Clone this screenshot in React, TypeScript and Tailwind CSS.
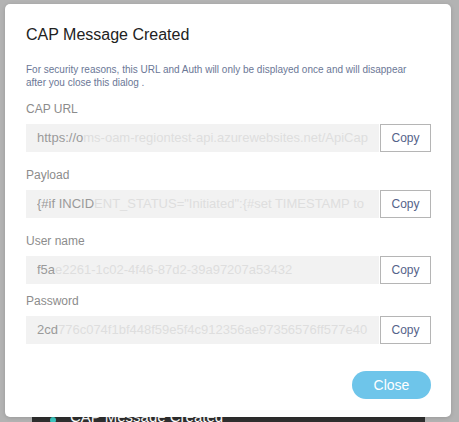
const fields = [
  {
    label: "CAP URL",
    shown: "https://o",
    hidden: "ms-oam-regiontest-api.azurewebsites.net/ApiCap",
    space: "",
  },
  {
    label: "Payload",
    shown: "{#if INCID",
    hidden: 'ENT_STATUS="Initiated":{#set TIMESTAMP to',
    space: "mt-[15px]",
  },
  {
    label: "User name",
    shown: "f5a",
    hidden: "e2261-1c02-4f46-87d2-39a97207a53432",
    space: "mt-[15px]",
  },
  {
    label: "Password",
    shown: "2cd",
    hidden: "776c074f1bf448f59e5f4c912356ae97356576ff577e40",
    space: "mt-[9px]",
  },
];

export default function App() {
  return (
    <div className="relative h-[422px] w-full overflow-hidden bg-[#b3b3b3] font-['Liberation_Sans',Arial,sans-serif]">
      {/* toast sitting under the overlay */}
      <div className="absolute left-[32px] top-[406px] flex h-[30px] w-[393px] items-start gap-[14px] bg-[#2f2f2f] pl-[18px] pt-[2px]">
        <span className="mt-[9px] h-[6px] w-[6px] rounded-full bg-[#3cc8c0]" />
        <span className="text-[15px] leading-[18px] text-white">CAP Message Created</span>
      </div>

      <div className="relative z-10 ml-[5px] mt-[4px] flex h-[413px] w-[446px] flex-col rounded-[5px] bg-white pl-[21px] pr-[20px] pt-[21px] shadow-[0_1px_4px_rgba(0,0,0,0.15)]">
        <h1 className="text-[16px] leading-[20px] text-[#222]">CAP Message Created</h1>
        <p className="mt-[18px] text-[10px] leading-[13px] text-[#6b7796]">
          For security reasons, this URL and Auth will only be displayed once and will disappear
          <br />
          after you close this dialog .
        </p>

        <div className="mt-[12px] flex flex-col">
          {fields.map((f) => (
            <div key={f.label} className={f.space}>
              <div className="text-[12px] leading-[16px] text-[#8c8c8c]">{f.label}</div>
              <div className="mt-[7px] flex gap-px">
                <div className="flex h-[28px] w-[353px] items-center bg-[#f2f2f2] pl-[11px] pr-[9px]">
                  <div className="w-full overflow-hidden whitespace-nowrap text-[13px]">
                    <span className="text-[#9a9a9a]">{f.shown}</span>
                    <span className="text-[#dedede]">{f.hidden}</span>
                  </div>
                </div>
                <button className="h-[28px] w-[51px] border border-[#b5b5b5] bg-white text-[12px] text-[#55638a]">
                  Copy
                </button>
              </div>
            </div>
          ))}
        </div>

        <div className="mt-[27px] flex justify-end">
          <button className="h-[28px] w-[79px] rounded-full bg-[#6ec5ea] text-[14px] text-white">
            Close
          </button>
        </div>
      </div>
    </div>
  );
}
